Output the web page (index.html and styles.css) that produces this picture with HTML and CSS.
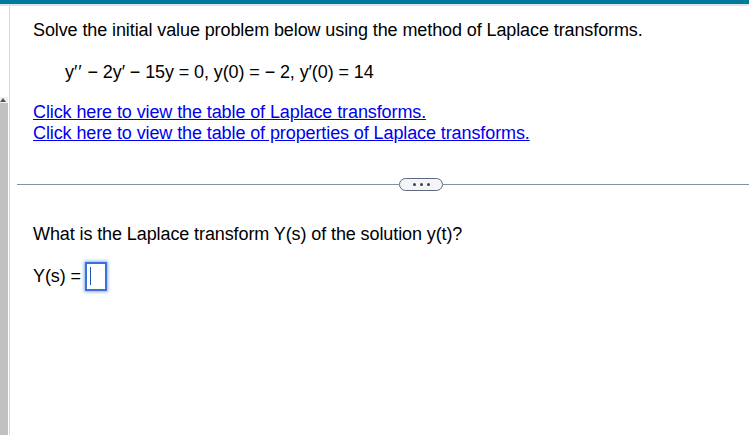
FILE: index.html
```html
<!DOCTYPE html>
<html>
<head>
<meta charset="utf-8">
<link rel="stylesheet" href="styles.css">
</head>
<body>
<div class="topbar"></div>
<div class="frame">
  <div class="gutter">
    <div class="scroll"><span class="arrow"></span></div>
  </div>
  <div class="rule-v"></div>
  <main class="content">
    <p class="intro">Solve the initial value problem below using the method of Laplace transforms.</p>
    <p class="eq">y<span class="pp">′′</span> − 2y′ − 15y = 0, y(0) =  − 2, y′(0) = 14</p>
    <div class="links">
      <a href="#">Click here to view the table of Laplace transforms.</a>
      <a href="#">Click here to view the table of properties of Laplace transforms.</a>
    </div>
    <div class="divider">
      <span class="line first"></span>
      <span class="more"><i></i><i></i><i></i></span>
      <span class="line"></span>
    </div>
    <p class="question">What is the Laplace transform Y(s) of the solution y(t)?</p>
    <div class="answer">
      <span>Y(s) =</span>
      <span class="box"><span class="caret"></span></span>
    </div>
  </main>
</div>
</body>
</html>
```
FILE: styles.css
```css
html, body { margin: 0; padding: 0; background: #fff; }
body {
  font-family: "Liberation Sans", Arial, sans-serif;
  color: #000;
  width: 749px;
  height: 435px;
  overflow: hidden;
}
.topbar {
  height: 4px;
  background: #007a99;
  border-bottom: 2px solid #dde3e8;
}
.frame {
  display: flex;
  height: 429px;
}
.gutter {
  width: 8px;
  display: flex;
  flex-direction: column;
  padding-top: 91px;
}
.scroll {
  flex: 1;
  background: #c1c1c1;
  position: relative;
  border-top: 6px solid #f0f0f0;
}
.arrow {
  position: absolute;
  top: -5px;
  left: 0;
  width: 0; height: 0;
  border-left: 3px solid transparent;
  border-right: 3px solid transparent;
  border-bottom: 4px solid #555;
}
.rule-v {
  width: 1px;
  margin-left: 1px;
  background: #d4d9df;
}
.content {
  flex: 1;
  padding-left: 23px;
  font-size: 18px;
  line-height: 21px;
  letter-spacing: -0.1px;
}
.intro { margin: 14px 0 0; }
.eq { margin: 21px 0 0 32px; }
.pp { letter-spacing: 1px; }
.links { margin-top: 19px; display: flex; flex-direction: column; }
.links a { color: #0000ee; text-decoration: underline; }
.divider {
  display: flex;
  align-items: center;
  margin-top: 34px;
  margin-left: -16px;
}
.line { flex: 1; height: 1px; background: #8591a3; }
.line.first { flex: 0 0 382px; }
.more {
  width: 42px;
  height: 11px;
  border: 1px solid #5e6a7d;
  border-radius: 7px;
  background: #f3f5f7;
  display: flex;
  justify-content: center;
  align-items: center;
  gap: 4px;
}
.more i {
  width: 3px; height: 3px; border-radius: 50%;
  background: #3a4658;
}
.question { margin: 33px 0 0; }
.answer {
  margin-top: 17px;
  display: flex;
  align-items: center;
  gap: 3px;
}
.box {
  width: 18px;
  height: 25px;
  border: 2px solid #3b6fd9;
  box-shadow: 0 0 3px 1px #8fb0ee;
  background: #fff;
  position: relative;
  margin-left: 1px;
}
.caret {
  position: absolute;
  left: 3px;
  top: 3px;
  width: 1px;
  height: 18px;
  background: #2453c7;
}
```
